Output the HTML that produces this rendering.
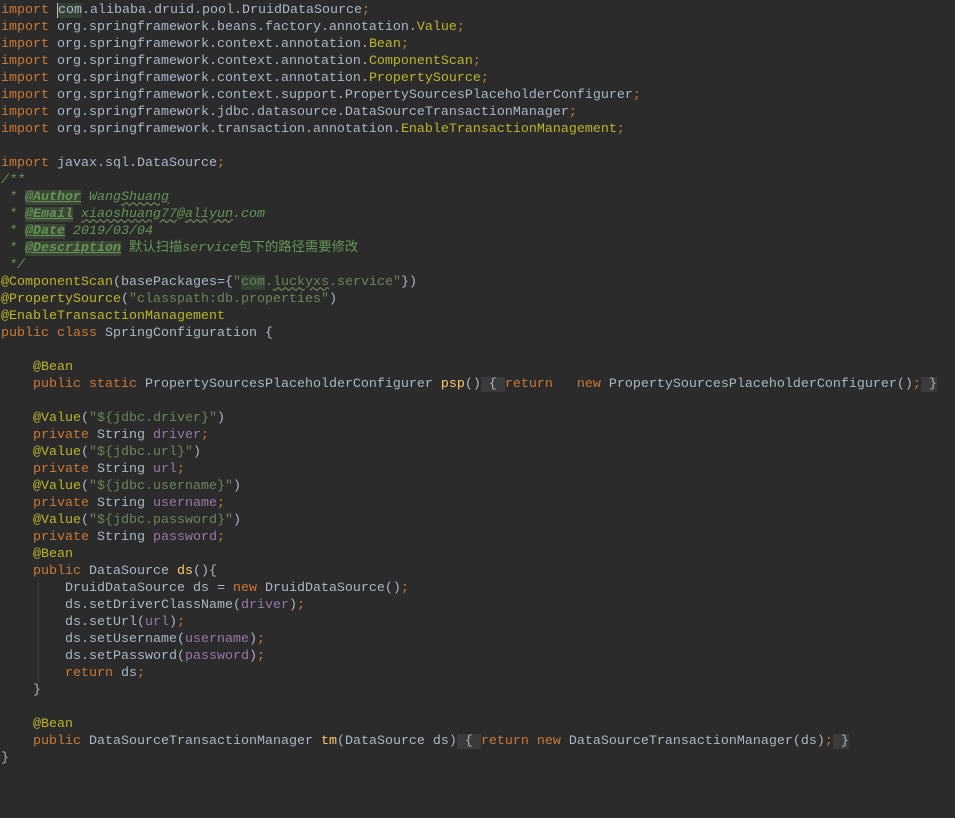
<!DOCTYPE html>
<html><head><meta charset="utf-8"><style>
html,body{margin:0;padding:0;background:#2b2b2b;width:955px;height:818px;overflow:hidden}
pre{margin:0;padding:2px 0 0 1px;font-family:"Liberation Mono","Noto Sans CJK SC",monospace;font-size:13.33px;line-height:17px;color:#a9b7c6;white-space:pre;position:relative}
.k{color:#cc7832}.a{color:#bbb529}.s{color:#6a8759}.f{color:#9876aa}.m{color:#ffc66d}.d{color:#629755;font-style:italic}.c{color:#629755}
.t{color:#629755;font-style:italic;font-weight:bold;text-decoration:underline;background:#3d4536}
.fold{background:#3b3b3b}
.w{text-decoration:underline wavy #6a7d54}
.cur{border-left:1px solid #bbb;background:#344134}
.g{position:absolute;left:38px;top:581px;width:1px;height:102px;background:#3b3b3b}
</style></head><body><pre><span class="k">import </span><span class="cur">com</span>.alibaba.druid.pool.DruidDataSource<span class="k">;</span>
<span class="k">import </span>org.springframework.beans.factory.annotation.<span class="a">Value</span><span class="k">;</span>
<span class="k">import </span>org.springframework.context.annotation.<span class="a">Bean</span><span class="k">;</span>
<span class="k">import </span>org.springframework.context.annotation.<span class="a">ComponentScan</span><span class="k">;</span>
<span class="k">import </span>org.springframework.context.annotation.<span class="a">PropertySource</span><span class="k">;</span>
<span class="k">import </span>org.springframework.context.support.PropertySourcesPlaceholderConfigurer<span class="k">;</span>
<span class="k">import </span>org.springframework.jdbc.datasource.DataSourceTransactionManager<span class="k">;</span>
<span class="k">import </span>org.springframework.transaction.annotation.<span class="a">EnableTransactionManagement</span><span class="k">;</span>

<span class="k">import </span>javax.sql.DataSource<span class="k">;</span>
<span class="d">/**</span>
<span class="d"> * </span><span class="t">@Author</span><span class="d"> Wang<span class="w">Shuang</span></span>
<span class="d"> * </span><span class="t">@Email</span><span class="d"> <span class="w">xiaoshuang77</span>@<span class="w">aliyun</span>.com</span>
<span class="d"> * </span><span class="t">@Date</span><span class="d"> 2019/03/04</span>
<span class="d"> * </span><span class="t">@Description</span><span class="d"> <span style="font-style:normal">默认扫描</span>service<span style="font-style:normal">包下的路径需要修改</span></span>
<span class="d"> */</span>
<span class="a">@ComponentScan</span>(basePackages={<span class="s">"<span style="background:#344134">com</span>.<span class="w">luckyxs</span>.service"</span>})
<span class="a">@PropertySource</span>(<span class="s">"classpath:db.properties"</span>)
<span class="a">@EnableTransactionManagement</span>
<span class="k">public class </span>SpringConfiguration {

    <span class="a">@Bean</span>
    <span class="k">public static </span>PropertySourcesPlaceholderConfigurer <span class="m">psp</span>()<span class="fold"> { </span><span class="k">return   new </span>PropertySourcesPlaceholderConfigurer()<span class="k">;</span><span class="fold"> }</span>

    <span class="a">@Value</span>(<span class="s">"${jdbc.driver}"</span>)
    <span class="k">private </span>String <span class="f">driver</span><span class="k">;</span>
    <span class="a">@Value</span>(<span class="s">"${jdbc.url}"</span>)
    <span class="k">private </span>String <span class="f">url</span><span class="k">;</span>
    <span class="a">@Value</span>(<span class="s">"${jdbc.username}"</span>)
    <span class="k">private </span>String <span class="f">username</span><span class="k">;</span>
    <span class="a">@Value</span>(<span class="s">"${jdbc.password}"</span>)
    <span class="k">private </span>String <span class="f">password</span><span class="k">;</span>
    <span class="a">@Bean</span>
    <span class="k">public </span>DataSource <span class="m">ds</span>(){
        DruidDataSource ds = <span class="k">new </span>DruidDataSource()<span class="k">;</span>
        ds.setDriverClassName(<span class="f">driver</span>)<span class="k">;</span>
        ds.setUrl(<span class="f">url</span>)<span class="k">;</span>
        ds.setUsername(<span class="f">username</span>)<span class="k">;</span>
        ds.setPassword(<span class="f">password</span>)<span class="k">;</span>
        <span class="k">return </span>ds<span class="k">;</span>
    }

    <span class="a">@Bean</span>
    <span class="k">public </span>DataSourceTransactionManager <span class="m">tm</span>(DataSource ds)<span class="fold"> { </span><span class="k">return new </span>DataSourceTransactionManager(ds)<span class="k">;</span><span class="fold"> }</span>
}
<span class="g"></span></pre></body></html>
